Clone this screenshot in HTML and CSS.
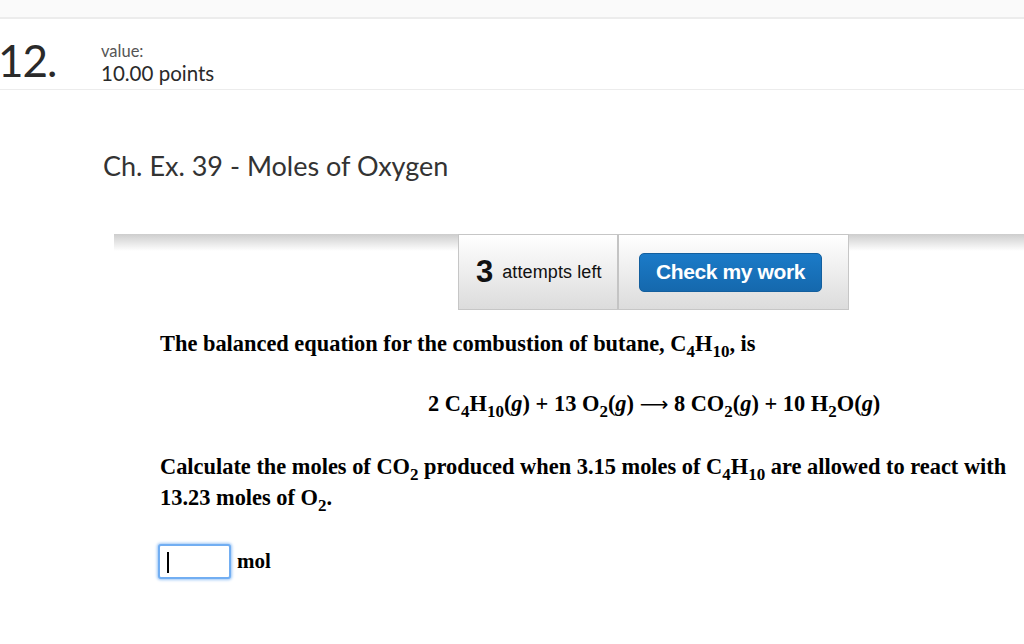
FILE: index.html
```html
<!DOCTYPE html>
<html>
<head>
<meta charset="utf-8">
<link rel="stylesheet" href="styles.css">
</head>
<body>
<div class="topbar"></div>
<div class="qhead">
  <div class="qnum">12.</div>
  <div class="qval">
    <div class="vlabel">value:</div>
    <div class="vpoints">10.00 points</div>
  </div>
</div>
<h1 class="title">Ch. Ex. 39 - Moles of Oxygen</h1>
<div class="toolbar">
  <div class="tbox">
    <div class="attempts"><span class="anum">3</span><span class="atext">attempts left</span></div>
    <div class="checkcell"><button class="checkbtn">Check my work</button></div>
  </div>
</div>
<div class="content">
  <p class="para">The balanced equation for the combustion of butane, C<sub>4</sub>H<sub>10</sub>, is</p>
  <p class="eq">2 C<sub>4</sub>H<sub>10</sub>(<i>g</i>) + 13 O<sub>2</sub>(<i>g</i>) <span class="arrow">⟶</span> 8 CO<sub>2</sub>(<i>g</i>) + 10 H<sub>2</sub>O(<i>g</i>)</p>
  <p class="para q">Calculate the moles of CO<sub>2</sub> produced when 3.15 moles of C<sub>4</sub>H<sub>10</sub> are allowed to react with 13.23 moles of O<sub>2</sub>.</p>
  <div class="answer"><div class="inp"><span class="caret"></span></div><span class="unit">mol</span></div>
</div>
</body>
</html>
```

FILE: styles.css
```css
html, body { margin: 0; padding: 0; background: #fff; }
body { width: 1024px; height: 644px; overflow: hidden; font-family: Lato, "Open Sans", sans-serif; color: #333; }

.topbar { height: 17px; background: #fafafa; border-bottom: 2px solid #ececec; }

.qhead { display: flex; height: 70px; border-bottom: 1px solid #ececec; }
.qnum { width: 103px; font-size: 44px; line-height: 1; padding-top: 19px; color: #2a2a2a; box-sizing: border-box; margin-left: -2px; letter-spacing: -1px; }
.qval { padding-top: 22px; }
.vlabel { font-size: 16.5px; color: #555; line-height: 20px; }
.vpoints { font-size: 20.5px; color: #2a2a2a; line-height: 24px; }

.title { margin: 58px 0 0 103px; font-size: 27px; font-weight: 400; color: #333; line-height: 36px; }

.toolbar { margin: 50px 0 0 114px; background: linear-gradient(#cdcdcd, #fff 17px); padding-left: 344px; height: 76px; }
.tbox { display: flex; width: 391px; height: 76px; box-sizing: border-box; border: 1px solid #c6c6c6; background: linear-gradient(#fff, #dcdcdc); }
.attempts { width: 160px; border-right: 2px solid #c4c4c4; display: flex; align-items: center; padding-left: 17px; box-sizing: border-box; font-family: "Liberation Sans", Arial, sans-serif; color: #111; }
.anum { font-size: 31px; font-weight: 700; margin-right: 9px; }
.atext { font-size: 18px; letter-spacing: 0.1px; }
.checkcell { flex: 1; display: flex; align-items: center; padding-left: 20px; }
.checkbtn { width: 183px; height: 39px; border: 1px solid #135f9e; border-radius: 5px; background: linear-gradient(#1b7bc8, #1568ad); color: #fff; font-family: "Liberation Sans", Arial, sans-serif; font-weight: 700; font-size: 21px; letter-spacing: -0.4px; padding: 0; }

.content { padding-left: 160px; font-family: "Liberation Serif", "Times New Roman", serif; font-weight: 700; color: #000; font-size: 22.4px; }
.para { margin: 18px 0 0; line-height: 31px; }
.para sub, .eq sub { font-size: 17px; vertical-align: -6px; line-height: 0; }
.eq { margin: 29px 0 0 268px; line-height: 31px; }
.arrow { font-family: "DejaVu Sans", sans-serif; font-weight: 400; font-size: 20px; }
.q { margin-top: 31px; width: 860px; }
.answer { display: flex; align-items: center; margin-top: 31px; }
.inp { width: 69px; height: 31px; border: 2px solid #72aef2; border-radius: 3px; box-shadow: 0 0 3px 1px #9cc6f6; background: #fff; margin-left: -2px; position: relative; }
.caret { position: absolute; left: 7px; top: 6px; width: 2px; height: 21px; background: #000; }
.unit { margin-left: 6px; font-size: 21px; }
```
